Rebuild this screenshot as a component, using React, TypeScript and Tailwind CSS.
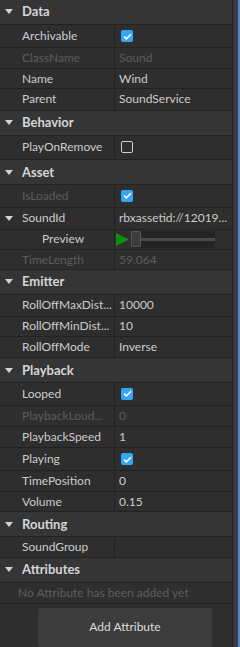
import React from 'react';

type Row =
  | { kind: 'header'; label: string; h: number }
  | { kind: 'prop'; name: string; value?: string; check?: boolean; disabled?: boolean; expand?: boolean; h: number }
  | { kind: 'preview'; h: number }
  | { kind: 'empty'; h: number };

const rows: Row[] = [
  { kind: 'header', label: 'Data', h: 25 },
  { kind: 'prop', name: 'Archivable', check: true, h: 24 },
  { kind: 'prop', name: 'ClassName', value: 'Sound', disabled: true, h: 21 },
  { kind: 'prop', name: 'Name', value: 'Wind', h: 20 },
  { kind: 'prop', name: 'Parent', value: 'SoundService', h: 22 },
  { kind: 'header', label: 'Behavior', h: 25 },
  { kind: 'prop', name: 'PlayOnRemove', check: false, h: 25 },
  { kind: 'header', label: 'Asset', h: 25 },
  { kind: 'prop', name: 'IsLoaded', check: true, disabled: true, h: 23 },
  { kind: 'prop', name: 'SoundId', value: 'rbxassetid://12019...', expand: true, h: 22 },
  { kind: 'preview', h: 21 },
  { kind: 'prop', name: 'TimeLength', value: '59.064', disabled: true, h: 20 },
  { kind: 'header', label: 'Emitter', h: 25 },
  { kind: 'prop', name: 'RollOffMaxDist...', value: '10000', h: 22 },
  { kind: 'prop', name: 'RollOffMinDist...', value: '10', h: 21 },
  { kind: 'prop', name: 'RollOffMode', value: 'Inverse', h: 21 },
  { kind: 'header', label: 'Playback', h: 25 },
  { kind: 'prop', name: 'Looped', check: true, h: 23 },
  { kind: 'prop', name: 'PlaybackLoud...', value: '0', disabled: true, h: 22 },
  { kind: 'prop', name: 'PlaybackSpeed', value: '1', h: 21 },
  { kind: 'prop', name: 'Playing', check: true, h: 23 },
  { kind: 'prop', name: 'TimePosition', value: '0', h: 21 },
  { kind: 'prop', name: 'Volume', value: '0.15', h: 21 },
  { kind: 'header', label: 'Routing', h: 25 },
  { kind: 'prop', name: 'SoundGroup', value: '', h: 21 },
  { kind: 'header', label: 'Attributes', h: 25 },
  { kind: 'empty', h: 21 },
];

function Triangle() {
  return (
    <svg width="8" height="5" viewBox="0 0 8 5" className="shrink-0">
      <path d="M0 0H8L4 5Z" fill="#d4d4d4" />
    </svg>
  );
}

function Checkbox({ on }: { on: boolean }) {
  if (!on) return <div className="h-[12px] w-[12px] rounded-[2px] border border-[#d0d0d0]" />;
  return (
    <div className="flex h-[12px] w-[12px] items-center justify-center rounded-[2px] bg-[#35a5f5]">
      <svg width="9" height="7" viewBox="0 0 9 7">
        <path d="M1 3.5L3.4 5.8L8 1.2" fill="none" stroke="#ffffff" strokeWidth="1.6" />
      </svg>
    </div>
  );
}

function RowView({ row }: { row: Row }) {
  if (row.kind === 'header') {
    return (
      <div style={{ height: row.h }} className="flex items-center border-b border-[#222222] bg-[#353535] pl-[5px]">
        <Triangle />
        <span className="ml-[9px] text-[13px] font-bold text-[#d6d6d6]">{row.label}</span>
      </div>
    );
  }
  if (row.kind === 'empty') {
    return (
      <div style={{ height: row.h }} className="flex items-center border-b border-[#222222] pl-[18px] text-[#5e5e5e]">
        No Attribute has been added yet
      </div>
    );
  }
  if (row.kind === 'preview') {
    return (
      <div style={{ height: row.h }} className="flex border-b border-[#222222]">
        <div className="flex w-[115px] shrink-0 items-center border-r border-[#222222] pl-[42px] text-[#cccccc]">Preview</div>
        <div className="flex items-center pl-[1px]">
          <svg width="13" height="13" viewBox="0 0 13 13" className="shrink-0">
            <path d="M0 0L13 6.5L0 13Z" fill="#0f8f12" />
          </svg>
          <div className="ml-[2px] flex h-[17px] w-[84px] items-center bg-[#242424]">
            <div className="h-[16px] w-[10px] shrink-0 rounded-[1px] border border-[#555555] bg-[#3c3c3c]" />
            <div className="h-[3px] flex-1 bg-[#4a4a4a]" />
          </div>
        </div>
      </div>
    );
  }
  const nameColor = row.disabled ? 'text-[#5c5c5c]' : 'text-[#cccccc]';
  return (
    <div style={{ height: row.h }} className="flex border-b border-[#222222]">
      <div className={`flex w-[115px] shrink-0 items-center overflow-hidden whitespace-nowrap border-r border-[#222222] ${nameColor}`}>
        <div className="flex w-[22px] shrink-0 justify-start pl-[5px]">{row.expand && <Triangle />}</div>
        <span>{row.name}</span>
      </div>
      <div className={`flex min-w-0 flex-1 items-center overflow-hidden whitespace-nowrap ${row.check !== undefined ? 'pl-[6px]' : 'pl-[4px]'} ${nameColor}`}>
        {row.check !== undefined ? <Checkbox on={row.check} /> : <span>{row.value}</span>}
      </div>
    </div>
  );
}

export default function App() {
  return (
    <div className="flex h-[647px] w-[240px] overflow-hidden bg-[#2e2e2e] font-['Lato',sans-serif] text-[12px] leading-none">
      <div className="flex w-[232px] shrink-0 flex-col">
        {rows.map((row, i) => <RowView key={i} row={row} />)}
        <div className="mt-[4px] ml-[38px] mr-[20px] flex h-[40px] items-center justify-center rounded-[2px] bg-[#3c3c3c] text-[#dcdcdc]">
          Add Attribute
        </div>
      </div>
      <div className="w-[1px] shrink-0 bg-[#1f1f1f]" />
      <div className="w-[5px] shrink-0 bg-[#3a3a3a]" />
      <div className="w-[2px] shrink-0 bg-[#4a8ccc]" />
    </div>
  );
}
